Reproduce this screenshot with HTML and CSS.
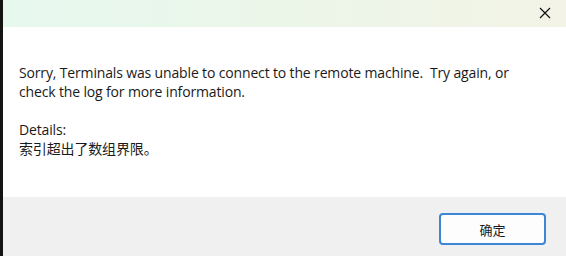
FILE: index.html
```html
<!DOCTYPE html>
<html>
<head>
<meta charset="utf-8">
<link rel="stylesheet" href="styles.css">
</head>
<body>
<div class="window">
  <div class="titlebar">
    <span class="close" aria-label="Close">
      <svg width="12" height="12" viewBox="0 0 12 12"><path d="M1 1 L11 11 M11 1 L1 11" stroke="#111" stroke-width="1.2" fill="none"/></svg>
    </span>
  </div>
  <div class="content">
    <p class="msg">Sorry, Terminals was unable to connect to the remote machine.&nbsp; Try again, or<br>check the log for more information.</p>
    <p class="msg details">Details:<br>索引超出了数组界限。</p>
  </div>
  <div class="footer">
    <button class="ok">确定</button>
  </div>
</div>
</body>
</html>
```
FILE: styles.css
```css
html, body {
  margin: 0;
  padding: 0;
  background: #ffffff;
}
.window {
  width: 566px;
  height: 256px;
  box-sizing: border-box;
  border-left: 3px solid #141414;
  display: flex;
  flex-direction: column;
  font-family: "Open Sans", "Noto Sans CJK SC", sans-serif;
  color: #1a1a1a;
}
.titlebar {
  height: 27px;
  flex: none;
  background: linear-gradient(90deg, #e7f8ef 0%, #ebf6e8 50%, #f3f3e7 100%);
  display: flex;
  justify-content: flex-end;
  align-items: center;
}
.close {
  width: 12px;
  height: 12px;
  margin-right: 15px;
  margin-top: -2px;
  display: flex;
}
.content {
  flex: 1;
  background: #ffffff;
  padding: 36px 0 0 16px;
}
.msg {
  margin: 0;
  font-size: 14px;
  line-height: 19px;
  letter-spacing: -0.15px;
}
.details {
  margin-top: 19px;
}
.footer {
  height: 59px;
  flex: none;
  background: #f0f0f0;
  display: flex;
  justify-content: flex-end;
  align-items: flex-start;
}
.ok {
  margin: 16px 20px 0 0;
  width: 107px;
  height: 32px;
  box-sizing: border-box;
  border: 2px solid #3b87d6;
  border-radius: 4px;
  background: #fdfdfd;
  font-family: "Noto Sans CJK SC", sans-serif;
  font-size: 13px;
  color: #1a1a1a;
  padding: 0;
}
```
